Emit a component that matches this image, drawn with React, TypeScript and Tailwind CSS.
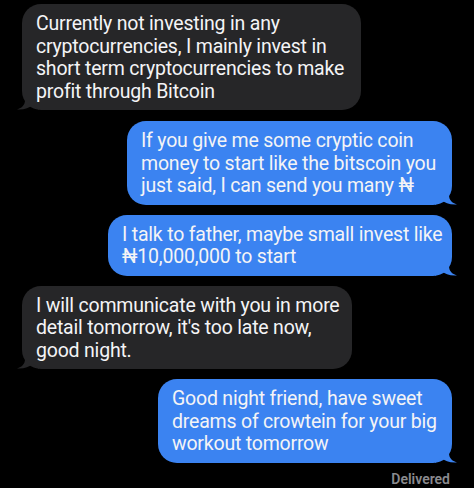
import React from "react";

type Msg = {
  from: "them" | "me";
  lines: string[];
  width: string;
  mt: string;
};

const messages: Msg[] = [
  {
    from: "them",
    lines: [
      "Currently not investing in any",
      "cryptocurrencies, I mainly invest in",
      "short term cryptocurrencies to make",
      "profit through Bitcoin",
    ],
    width: "w-[339px]",
    mt: "mt-[4px]",
  },
  {
    from: "me",
    lines: [
      "If you give me some cryptic coin",
      "money to start like the bitscoin you",
      "just said, I can send you many ₦",
    ],
    width: "w-[325px]",
    mt: "mt-[11px]",
  },
  {
    from: "me",
    lines: ["I talk to father, maybe small invest like", "₦10,000,000 to start"],
    width: "w-[344px]",
    mt: "mt-[10px]",
  },
  {
    from: "them",
    lines: [
      "I will communicate with you in more",
      "detail tomorrow, it's too late now,",
      "good night.",
    ],
    width: "w-[330px]",
    mt: "mt-[10px]",
  },
  {
    from: "me",
    lines: [
      "Good night friend, have sweet",
      "dreams of crowtein for your big",
      "workout tomorrow",
    ],
    width: "w-[294px]",
    mt: "mt-[10px]",
  },
];

function Tail({ side }: { side: "left" | "right" }) {
  if (side === "left") {
    return (
      <svg
        className="absolute -left-[5px] bottom-0"
        width="22"
        height="20"
        viewBox="0 0 22 20"
      >
        <path d="M8 0 L8 10 C8 15 5 18 0 19.5 C7 20 12 18 16 15 L22 20 L22 0 Z" fill="#262628" />
      </svg>
    );
  }
  return (
    <svg
      className="absolute -right-[5px] bottom-0"
      width="22"
      height="20"
      viewBox="0 0 22 20"
    >
      <path d="M14 0 L14 10 C14 15 17 18 22 19.5 C15 20 10 18 6 15 L0 20 L0 0 Z" fill="#3b83f1" />
    </svg>
  );
}

function Bubble({ msg }: { msg: Msg }) {
  const mine = msg.from === "me";
  return (
    <div className={`flex ${mine ? "justify-end" : "justify-start"} ${msg.mt}`}>
      <div
        className={`relative ${msg.width} rounded-[19px] pt-[9px] pb-[7px] pl-[14px] pr-[12px] ${
          mine ? "bg-[#3b83f1]" : "bg-[#262628]"
        }`}
      >
        <div className="relative z-10 text-[19.5px] leading-[22.5px] tracking-[-0.2px] text-[#f4f4f6] whitespace-nowrap">
          {msg.lines.map((l, i) => (
            <div key={i}>{l}</div>
          ))}
        </div>
        <Tail side={mine ? "right" : "left"} />
      </div>
    </div>
  );
}

export default function App() {
  return (
    <div
      className="w-[474px] h-[488px] bg-black px-[22px] overflow-hidden flex flex-col"
      style={{ fontFamily: 'Roboto, "Noto Sans", sans-serif' }}
    >
      {messages.map((m, i) => (
        <Bubble key={i} msg={m} />
      ))}
      <div className="mt-[6px] pr-[2px] text-right text-[14px] font-semibold text-[#8a8a8e]">
        Delivered
      </div>
    </div>
  );
}
